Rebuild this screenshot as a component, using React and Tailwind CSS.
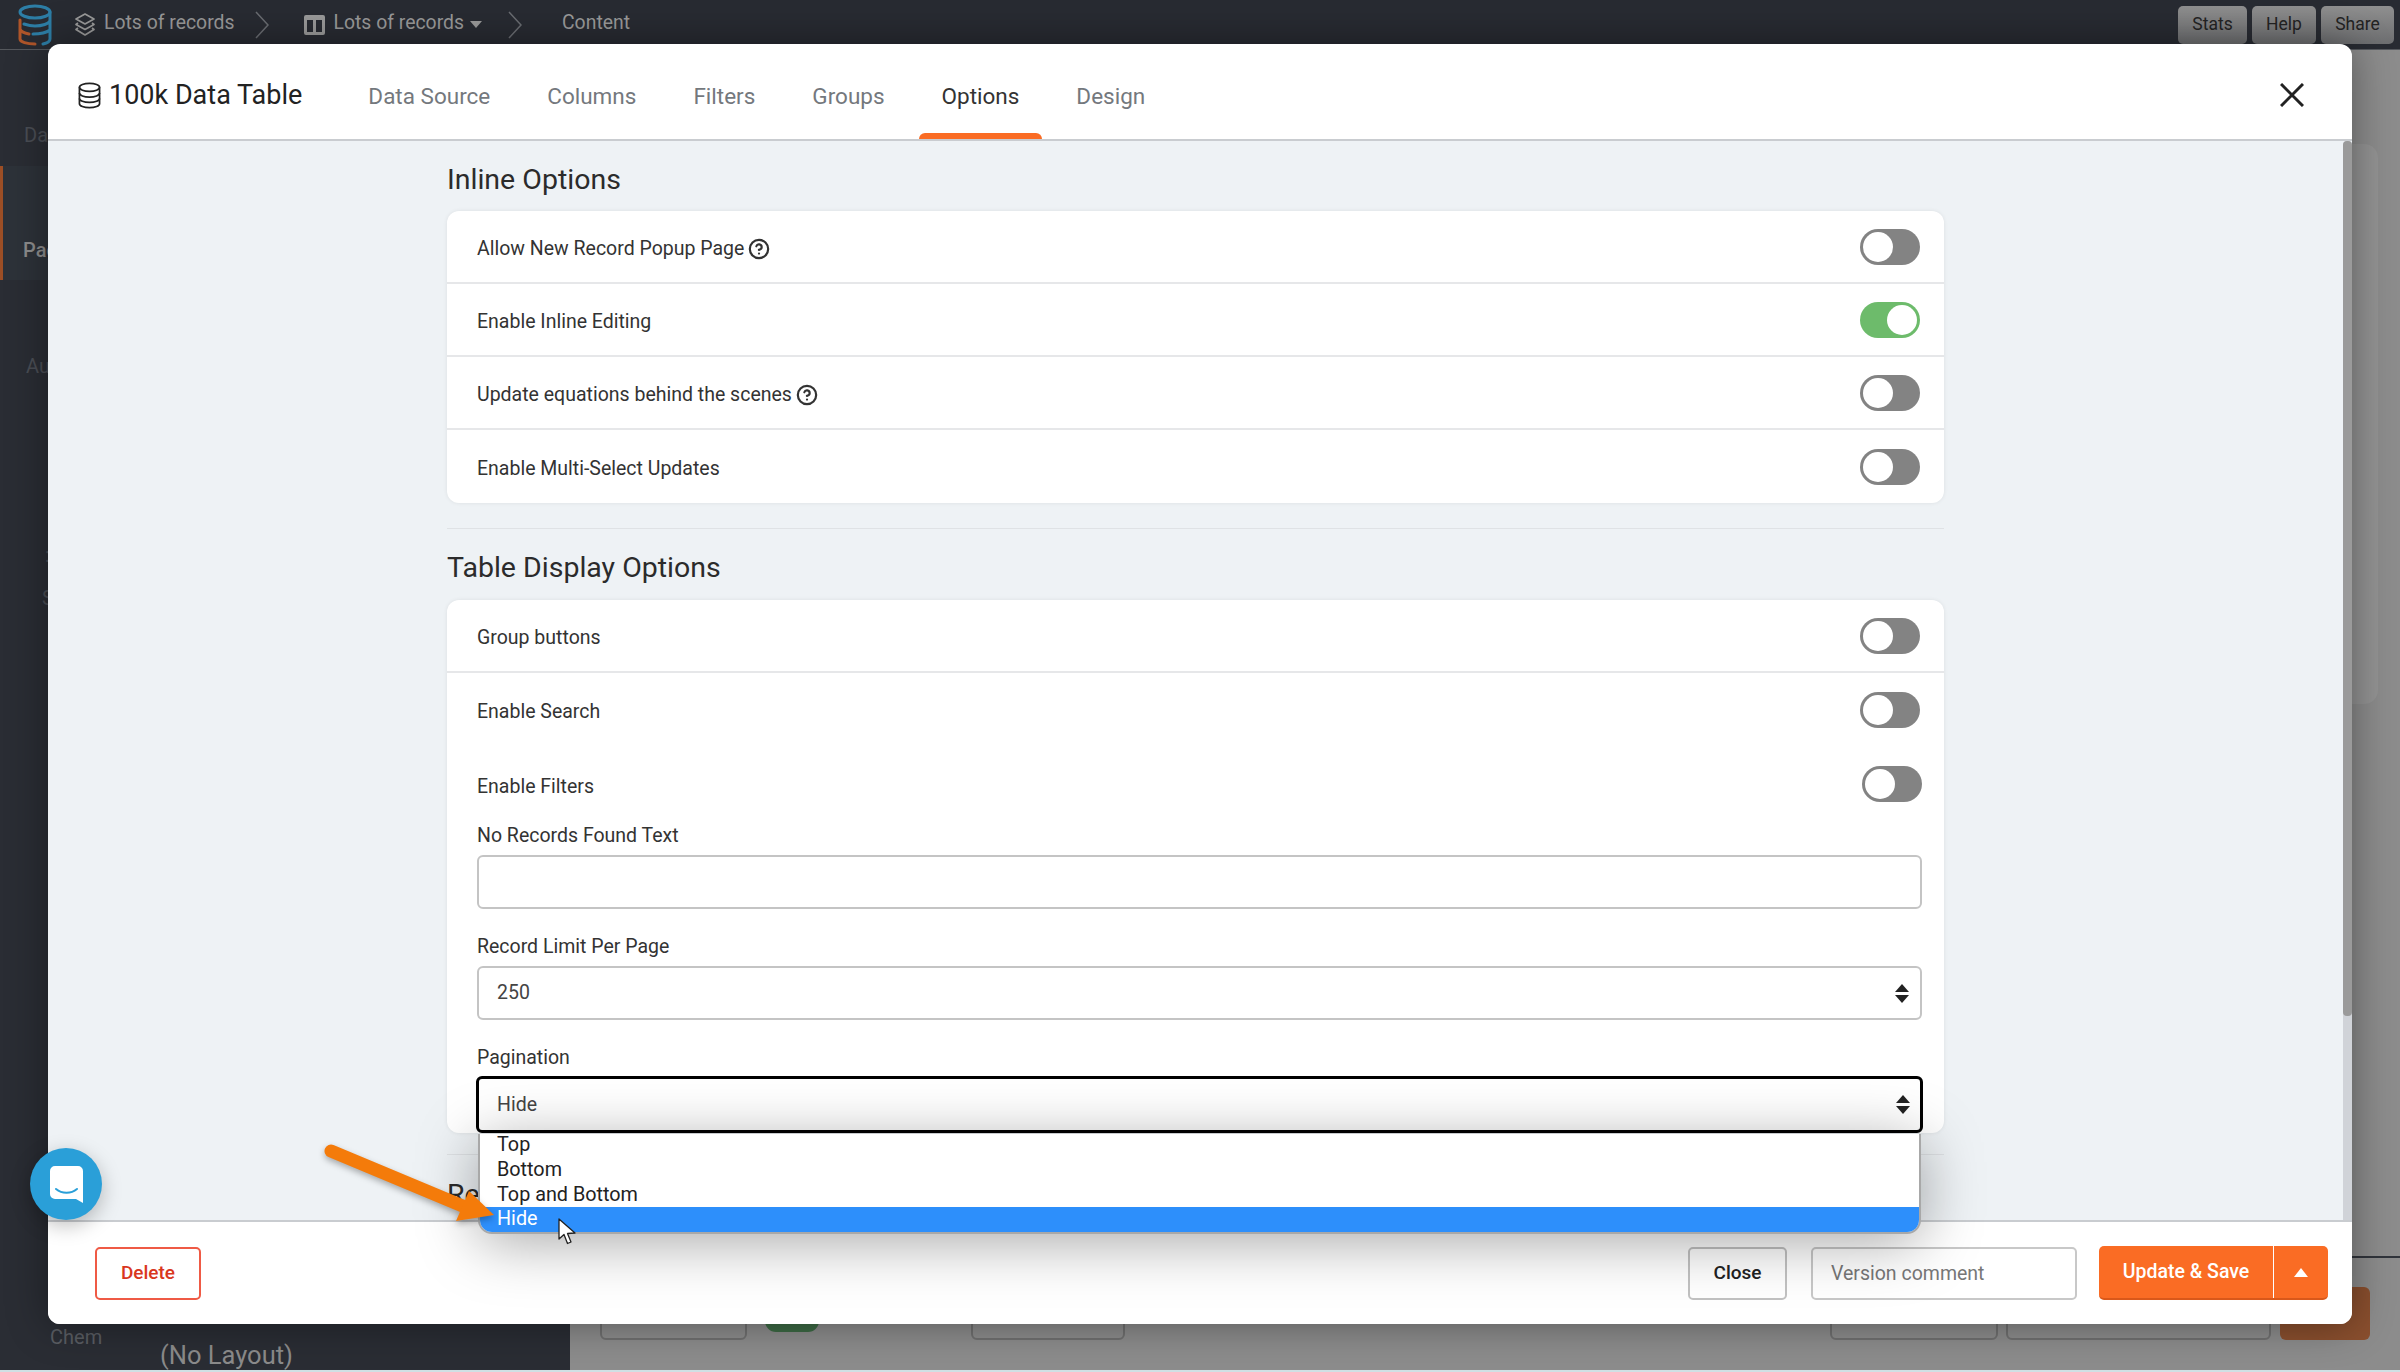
import { CircleHelp } from 'lucide-react';

const Db = ({ className }) => (
  <svg className={className} viewBox="0 0 24 28" fill="none" stroke="currentColor" strokeWidth="1.8">
    <ellipse cx="12" cy="5.5" rx="10.5" ry="4.2" />
    <path d="M1.5 5.5v17c0 2.4 4.7 4.2 10.5 4.2s10.5-1.8 10.5-4.2v-17" />
    <path d="M1.5 11.5c0 2.4 4.7 4.2 10.5 4.2s10.5-1.8 10.5-4.2" />
    <path d="M1.5 17c0 2.4 4.7 4.2 10.5 4.2s10.5-1.8 10.5-4.2" />
  </svg>
);

const Logo = () => (
  <svg className="w-[34px] h-[42px] shrink-0" viewBox="0 0 34 42" fill="none" strokeWidth="3" strokeLinecap="round">
    <ellipse cx="17" cy="8" rx="15" ry="6" stroke="#2d7ea6" />
    <path d="M32 8v27c0 2-2 4-7 5M6 20c3 1 7 2 11 2 6 0 15-2 15-6M15 30c6 0 13-1 17-4" stroke="#2d7ea6" />
    <path d="M2 16v19c0 3 7 5 15 5M2 25c1 3 4 4 9 5" stroke="#b0562a" />
  </svg>
);

const Chevron = () => (
  <svg className="w-[14px] h-[28px] shrink-0 text-[#6a6d72]" viewBox="0 0 14 28" fill="none" stroke="currentColor" strokeWidth="1.5">
    <path d="M1 1l12 13L1 27" />
  </svg>
);

const Toggle = ({ on, className = '' }) => (
  <div className={`w-[60px] h-[36px] rounded-full p-[3px] flex shrink-0 ${on ? 'bg-[#6dbb6b] justify-end' : 'bg-[#838383]'} ${className}`}>
    <div className="w-[30px] h-[30px] rounded-full bg-white" />
  </div>
);

const SortArrows = () => (
  <svg className="w-[14px] h-[19px]" viewBox="0 0 14 19" fill="#222">
    <path d="M7 0l7 8H0zM0 11h14l-7 8z" />
  </svg>
);

const Row = ({ label, help, on, last }) => (
  <div className={`h-[73px] flex items-center justify-between pl-[30px] pr-[24px] ${last ? '' : 'border-b-2 border-[#e6e7e9]'}`}>
    <div className="flex items-center gap-[4px] pt-[5px] text-[19.5px] text-[#333]">
      {label}
      {help && <CircleHelp className="w-[22px] h-[22px]" strokeWidth={2.4} />}
    </div>
    <Toggle on={on} />
  </div>
);

const Field = ({ label, children }) => (
  <div className="mb-[24px] last:mb-0">
    <div className="h-[24px] leading-[27px] text-[19.5px] text-[#333] mb-[9px]">{label}</div>
    {children}
  </div>
);

const tabs = ['Data Source', 'Columns', 'Filters', 'Groups', 'Options', 'Design'];

export default function App() {
  return (
    <div className="relative w-[2400px] h-[1372px] overflow-hidden font-['Roboto',sans-serif] bg-[#282c33] flex flex-col">
      {/* dimmed page behind the modal */}
      <div className="h-[50px] shrink-0 bg-[#282b32] border-b border-[#55585d] flex items-center pl-[18px] pr-[6px] text-[19.4px] text-[#9a9a9a]">
        <Logo />
        <svg className="w-[22px] h-[24px] ml-[22px] text-[#9a9a9a]" viewBox="0 0 22 24" fill="none" stroke="currentColor" strokeWidth="1.7" strokeLinejoin="round">
          <path d="M11 1l9 5-9 5-9-5zM4 10l-2 1.500 9 5 9-5-2-1.500M4 15l-2 1.500 9 5.500 9-5.500-2-1.500" />
        </svg>
        <span className="ml-[8px] pb-[3px]">Lots of records</span>
        <div className="ml-[20px]"><Chevron /></div>
        <svg className="w-[21px] h-[20px] ml-[35px]" viewBox="0 0 21 20" fill="#9a9a9a">
          <path d="M2 0h17a2 2 0 012 2v16a2 2 0 01-2 2H2a2 2 0 01-2-2V2a2 2 0 012-2zm1 5v12h6V5zm9 0v12h6V5z" />
        </svg>
        <span className="ml-[9px] pb-[3px]">Lots of records</span>
        <svg className="w-[12px] h-[7px] ml-[6px]" viewBox="0 0 12 7" fill="#9a9a9a"><path d="M0 0h12L6 7z" /></svg>
        <div className="ml-[26px]"><Chevron /></div>
        <span className="ml-[40px] pb-[3px]">Content</span>
        <div className="ml-auto flex gap-[5px] text-[17.5px] text-[#232323]">
          <div className="w-[69px] h-[38px] rounded-[5px] bg-gradient-to-b from-[#8f8f8f] to-[#6d6e70] flex items-center justify-center">Stats</div>
          <div className="w-[64px] h-[38px] rounded-[5px] bg-gradient-to-b from-[#8f8f8f] to-[#6d6e70] flex items-center justify-center">Help</div>
          <div className="w-[73px] h-[38px] rounded-[5px] bg-gradient-to-b from-[#8f8f8f] to-[#6d6e70] flex items-center justify-center">Share</div>
        </div>
      </div>

      <div className="flex-1 flex min-h-0">
        <aside className="w-[570px] shrink-0 flex flex-col bg-[#2a2d34] text-[20px] text-[#4a4e55]">
          <div className="h-[116px] pl-[24px] pt-[72px] leading-[26px]">Data</div>
          <div className="h-[114px] bg-[#2d3239] border-l-[3px] border-[#9c4e25] pl-[20px] pt-[71px] leading-[26px] text-[#8d8d8d] font-medium">Pages</div>
          <div className="pl-[26px] pt-[73px] leading-[26px]">Auth</div>
          <div className="pl-[45px] pt-[163px] leading-[26px]">:</div>
          <div className="pl-[42px] pt-[17px] leading-[26px]">Settings</div>
          <div className="mt-auto pl-[50px] flex items-end">
            <div className="w-[110px] mb-[20px] leading-[26px] text-[#5a5d63]">Chem</div>
            <div className="leading-[30px] text-[25.5px] text-[#8b8b8b]">(No Layout)</div>
          </div>
        </aside>
        <main className="flex-1 bg-[#8c8c8c] flex flex-col pb-[30px]">
          <div className="self-end mt-[94px] mr-[22px] w-[300px] h-[560px] rounded-[14px] bg-[#939393]" />
          <div className="mt-[552px] h-[2px] bg-[#30343b]" />
          <div className="mt-auto flex items-end pl-[30px]">
            <div className="w-[147px] h-[40px] rounded-[6px] border-2 border-[#707070]" />
            <div className="w-[54px] h-[22px] mb-[8px] ml-[18px] rounded-full bg-[#3d6b45]" />
            <div className="w-[154px] h-[40px] ml-[152px] rounded-[6px] border-2 border-[#707070]" />
            <div className="w-[168px] h-[40px] ml-auto rounded-[6px] border-2 border-[#707070]" />
            <div className="w-[265px] h-[40px] ml-[8px] rounded-[6px] border-2 border-[#707070]" />
            <div className="w-[90px] h-[53px] ml-[9px] mr-[30px] rounded-[6px] bg-[#8a4f2e]" />
          </div>
        </main>
      </div>
      <div className="h-[2px] shrink-0 bg-[#cfe0e4]" />

      {/* modal */}
      <div className="absolute left-[48px] top-[44px] w-[2304px] h-[1280px] rounded-[12px] bg-white flex flex-col overflow-hidden shadow-[0_0_40px_rgba(0,0,0,0.4)]">
        <div className="h-[97px] shrink-0 flex items-center pl-[30px] pr-[48px] pt-[7px] border-b-2 border-[#c9ccd0]">
          <Db className="w-[23px] h-[27px] text-[#222]" />
          <span className="ml-[8px] text-[27px] text-[#222]">100k Data Table</span>
          <div className="ml-[43px] flex self-stretch gap-[11px] -mt-[7px]">
            {tabs.map((t) => (
              <div key={t} className={`relative px-[23px] pt-[10px] flex items-center text-[22.5px] ${t === 'Options' ? 'text-[#333]' : 'text-[#74787d]'}`}>
                {t}
                {t === 'Options' && <div className="absolute left-0 right-0 bottom-0 h-[6px] rounded-t-[6px] bg-[#fa6c24]" />}
              </div>
            ))}
          </div>
          <svg className="ml-auto w-[24px] h-[24px] text-[#222]" viewBox="0 0 24 24" fill="none" stroke="currentColor" strokeWidth="3">
            <path d="M1 1l22 22M23 1L1 23" />
          </svg>
        </div>

        <div className="flex-1 min-h-0 flex bg-[#eef2f5]">
          <div className="flex-1 min-w-0 overflow-hidden">
            <div className="w-[1497px] mx-auto pt-[20px]">
              <div className="h-[36px] leading-[37px] text-[28.5px] text-[#2b2b2b] mb-[14px]">Inline Options</div>
              <div className="bg-white rounded-[12px] shadow-[0_0_4px_rgba(0,0,0,0.08)]">
                <Row label="Allow New Record Popup Page" help />
                <Row label="Enable Inline Editing" on />
                <Row label="Update equations behind the scenes" help />
                <Row label="Enable Multi-Select Updates" last />
              </div>
              <div className="mt-[25px] h-px bg-[#dfe2e5]" />
              <div className="mt-[20px] h-[36px] leading-[37px] text-[28.5px] text-[#2b2b2b] mb-[15px]">Table Display Options</div>
              <div className="bg-white rounded-[12px] shadow-[0_0_4px_rgba(0,0,0,0.08)]">
                <Row label="Group buttons" />
                <Row label="Enable Search" last />
                <div className="h-[76px] flex items-center justify-between pl-[30px] pr-[22px] text-[19.5px] text-[#333]">
                  <span className="pt-[5px]">Enable Filters</span>
                  <Toggle />
                </div>
                <div className="pl-[30px] pr-[22px]">
                  <Field label="No Records Found Text">
                    <div className="h-[54px] rounded-[6px] border-2 border-[#c4c4c4]" />
                  </Field>
                  <Field label="Record Limit Per Page">
                    <div className="h-[54px] rounded-[6px] border-2 border-[#c4c4c4] flex items-center justify-between pl-[18px] pr-[11px] text-[19.5px] text-[#444]">
                      250
                      <SortArrows />
                    </div>
                  </Field>
                  <div>
                    <div className="h-[24px] leading-[27px] text-[19.5px] text-[#333] mb-[8px]">Pagination</div>
                    <div className="h-[57px] -ml-[1px] -mr-[1px] rounded-[6px] border-[3px] border-black flex items-center justify-between pl-[18px] pr-[10px] text-[19.5px] text-[#444]">
                      Hide
                      <SortArrows />
                    </div>
                  </div>
                </div>
              </div>
              <div className="mt-[21px] h-px bg-[#dfe2e5]" />
              <div className="mt-[21px] h-[36px] leading-[37px] text-[28.5px] text-[#2b2b2b]">Re</div>
            </div>
          </div>
          <div className="w-[9px] shrink-0 bg-[#d0d3d8] rounded-t-[4px]">
            <div className="h-[875px] rounded-[4px] bg-[#9a9a9a]" />
          </div>
        </div>

        <div className="h-[104px] shrink-0 border-t-2 border-[#c9ccd0] bg-white flex items-center pl-[47px] pr-[24px]">
          <div className="w-[106px] h-[53px] rounded-[5px] border-2 border-[#ef5a45] flex items-center justify-center text-[19px] font-medium text-[#d9371e]">Delete</div>
          <div className="ml-auto w-[99px] h-[53px] rounded-[5px] border-2 border-[#c2c2c2] flex items-center justify-center text-[19px] font-medium text-[#222]">Close</div>
          <input className="ml-[24px] w-[266px] h-[53px] rounded-[5px] border-2 border-[#c8c8c8] px-[18px] text-[19.5px] placeholder:text-[#777]" placeholder="Version comment" />
          <div className="ml-[22px] flex h-[54px] rounded-[5px] bg-[#fa6c24] border-b-2 border-[#d9581a] text-white overflow-hidden">
            <div className="w-[175px] flex items-center justify-center text-[19.5px] font-medium border-r border-white">Update &amp; Save</div>
            <div className="w-[54px] flex items-center justify-center">
              <svg className="w-[14px] h-[9px]" viewBox="0 0 14 9" fill="#fff"><path d="M7 0l7 9H0z" /></svg>
            </div>
          </div>
        </div>
      </div>

      {/* open select list */}
      <div className="absolute left-[478px] top-[1134px] w-[1443px] h-[100px] rounded-b-[14px] bg-white border-x-2 border-b-2 border-[#a8a8a8] overflow-hidden text-[19.8px] leading-[25px] text-[#222] shadow-[0_8px_60px_rgba(0,0,0,0.35)]">
        <div className="pl-[17px] -mt-[2px]">Top</div>
        <div className="pl-[17px]">Bottom</div>
        <div className="pl-[17px]">Top and Bottom</div>
        <div className="pl-[17px] h-[26px] leading-[24px] bg-[#2d8ffb] text-white">Hide</div>
      </div>

      {/* annotation arrow */}
      <svg className="absolute left-[310px] top-[1135px] w-[200px] h-[100px] drop-shadow-[0_3px_3px_rgba(0,0,0,0.3)]" viewBox="0 0 200 100" fill="#f47b0a">
        <path d="M21 16L155 72" stroke="#f47b0a" strokeWidth="13" strokeLinecap="round" />
        <path d="M184 80L146 86L159 56z" />
      </svg>

      {/* mouse pointer */}
      <svg className="absolute left-[558px] top-[1218px] w-[19px] h-[28px]" viewBox="0 0 19 28" fill="#fff" stroke="#222" strokeWidth="1.3" strokeLinejoin="round">
        <path d="M1 1v20l5-4.500 3.500 9 3.500-1.500-3.500-8.500 7.500-.5z" />
      </svg>

      {/* chat bubble */}
      <div className="absolute left-[30px] top-[1148px] w-[72px] h-[72px] rounded-full bg-[#2a9fd8] flex items-center justify-center shadow-[0_6px_20px_rgba(0,0,0,0.25)]">
        <svg className="w-[33px] h-[37px]" viewBox="0 0 33 37" fill="#fff">
          <path d="M5 0h23a5 5 0 015 5v32l-7-4H5a5 5 0 01-5-5V5a5 5 0 015-5z" />
          <path d="M6 23c6 5 15 5 21 0" fill="none" stroke="#2a9fd8" strokeWidth="2" strokeLinecap="round" />
        </svg>
      </div>
    </div>
  );
}
